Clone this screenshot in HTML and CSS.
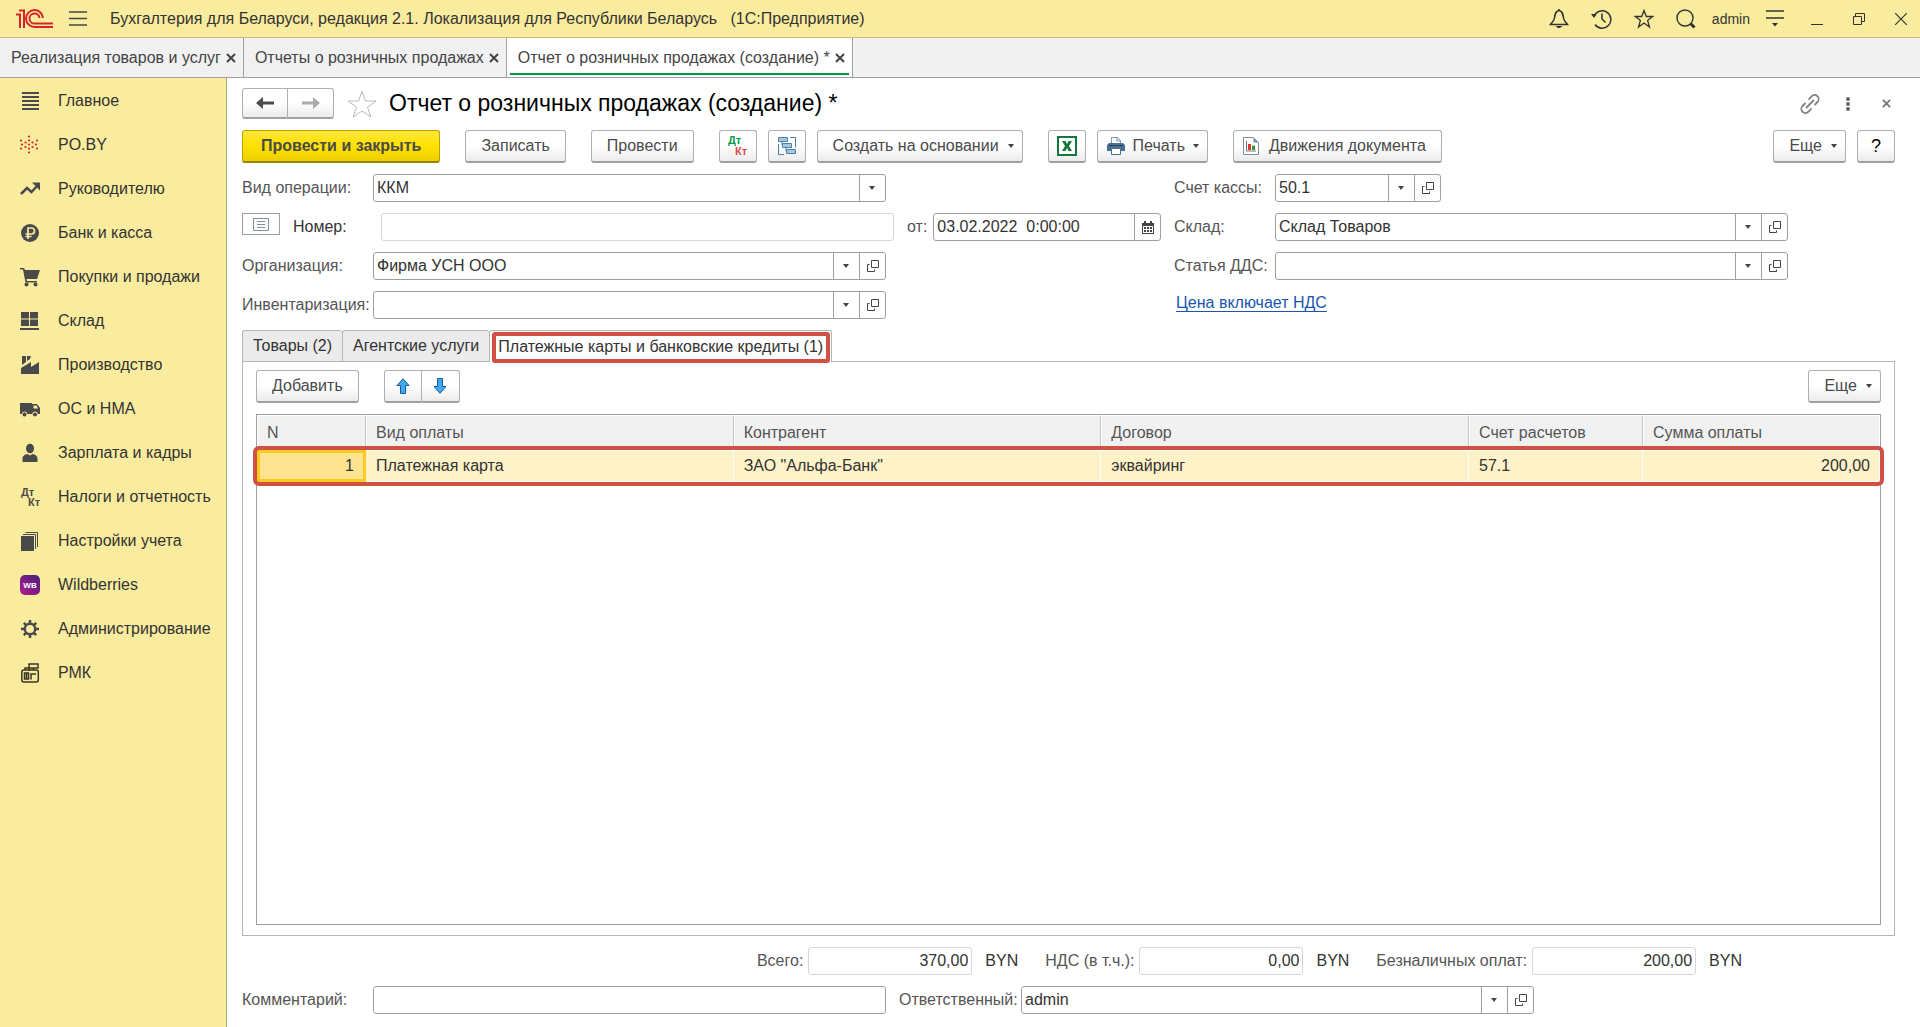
FILE: index.html
```html
<!DOCTYPE html>
<html lang="ru">
<head>
	<meta charset="UTF-8">
	<title>Отчет о розничных продажах (создание) *</title>
	<link rel="stylesheet" href="styles.css">
</head>
<body>
	<!-- общие иконки -->
	<svg class="sprite">
		<symbol id="cross" viewBox="0 0 10 10"><path d="M1 1l8 8M9 1L1 9" fill="none" stroke="currentColor" stroke-width="2"/></symbol>
		<symbol id="open" viewBox="0 0 12 12"><path d="M4.500.5h7v7h-7zM2.500 4.500h-2v7h7v-2" fill="none" stroke="#444"/></symbol>
		<symbol id="caret" viewBox="0 0 6 4"><path d="M0 0h6L3 4z" fill="#444"/></symbol>
	</svg>
	<header class="topbar">
		<svg class="logo" width="38" height="20" viewBox="0 0 38 20" fill="none" stroke="#d8232a" stroke-width="2"><path d="M0 5.500h4V19M3 1.500h5V19"/><path d="M27 9A8.500 8.500 0 1 0 19 18H37"/><path d="M23.500 9A5 5 0 1 0 19 14.500H37"/></svg>
		<button class="icon-btn menu" aria-label="Меню"><svg width="18" height="15" viewBox="0 0 18 15" stroke="#444" stroke-width="1.500"><path d="M0 1h18M0 7.500h18M0 14h18"/></svg></button>
		<div class="app-name">Бухгалтерия для Беларуси, редакция 2.1. Локализация для Республики Беларусь &nbsp; (1С:Предприятие)</div>
		<div class="top-tools">
			<button class="icon-btn" aria-label="Уведомления"><svg width="20" height="20" viewBox="0 0 20 20" fill="none" stroke="#333" stroke-width="1.500"><path d="M10 1.500C6.500 2 6 5 5.500 9 5 12 3 13.500 1.500 15.500h17C17 13.500 15 12 14.500 9 14 5 13.500 2 10 1.500z"/><path d="M10 0v2"/><path d="M6.500 17h7L11 19H9z" fill="#333" stroke="none"/></svg></button>
			<button class="icon-btn" aria-label="История"><svg width="21" height="20" viewBox="0 0 21 20" fill="none" stroke="#333" stroke-width="1.500"><path d="M3 7.500A8.700 8.700 0 1 1 4 15.500"/><path d="M11 4.500V10l3.500 3.500"/><path d="M0 5l5.500 0L3 9z" fill="#333" stroke="none"/></svg></button>
			<button class="icon-btn" aria-label="Избранное"><svg width="20" height="20" viewBox="0 0 20 20" fill="none" stroke="#333" stroke-width="1.300"><path d="M10 1.500l2.300 6h6.300l-5 3.900 1.900 6.600L10 14l-5.500 4 1.900-6.600-5-3.900h6.300z"/></svg></button>
			<button class="icon-btn" aria-label="Поиск"><svg width="20" height="20" viewBox="0 0 20 20" fill="none" stroke="#333" stroke-width="1.400"><circle cx="9" cy="9" r="8"/><path d="M14.500 14.500l4 4" stroke-width="3"/></svg></button>
			<button class="icon-btn user">admin</button>
			<button class="icon-btn" aria-label="Настройки"><svg width="18" height="17" viewBox="0 0 18 17" stroke="#333" stroke-width="1.300"><path d="M0 1h18M0 8h18"/><path d="M6 13h6l-3 3.500z" fill="#333" stroke="none"/></svg></button>
			<button class="icon-btn win" aria-label="Свернуть"><svg width="12" height="12" viewBox="0 0 12 12"><path d="M0 11.500h12" stroke="#333"/></svg></button>
			<button class="icon-btn win" aria-label="Окно"><svg width="12" height="12" viewBox="0 0 12 12" fill="none" stroke="#333"><path d="M.5 3.500h8v8h-8zM2.500 3V.5h9v8H9"/></svg></button>
			<button class="icon-btn win" aria-label="Закрыть"><svg width="12" height="12" viewBox="0 0 12 12" stroke="#333" stroke-width="1.200"><path d="M0 0l12 12M12 0L0 12"/></svg></button>
		</div>
	</header>
	<nav class="tabs">
		<div class="tab"><a href="#">Реализация товаров и услуг</a><button class="icon-btn" aria-label="Закрыть"><svg width="10" height="10"><use href="#cross"/></svg></button></div>
		<div class="tab"><a href="#">Отчеты о розничных продажах</a><button class="icon-btn" aria-label="Закрыть"><svg width="10" height="10"><use href="#cross"/></svg></button></div>
		<div class="tab active"><a href="#">Отчет о розничных продажах (создание) *</a><button class="icon-btn" aria-label="Закрыть"><svg width="10" height="10"><use href="#cross"/></svg></button></div>
	</nav>
	<div class="main">
		<aside class="sidebar">
			<a href="#"><svg width="20" height="20" viewBox="0 0 20 20" stroke="#4a4a4a" stroke-width="2"><path d="M2 2h17M2 6h17M2 10h17M2 14h17M2 18h17"/></svg>Главное</a>
			<a href="#"><svg width="20" height="20" viewBox="0 0 20 20" fill="none" stroke="#d9261c" stroke-width="2.200" stroke-linecap="round"><path d="M9 1.500v0M9 5.500v0M9 9.500v0M9 13.500v0M9 17.500v0M5.500 7.500v0M5.500 12v0M12.500 7.500v0M12.500 12v0M1 5.500v0M1 13.500v0M17 5.500v0M17 13.500v0M2 9.500v0M16 9.500v0"/></svg>PO.BY</a>
			<a href="#"><svg width="20" height="20" viewBox="0 0 20 20" fill="none" stroke="#4a4a4a" stroke-width="2.500"><path d="M1 15l6-6 4.500 4L18 6"/><path d="M12 3.500h8v8z" fill="#4a4a4a" stroke="none"/></svg>Руководителю</a>
			<a href="#"><svg width="20" height="20" viewBox="0 0 20 20"><circle cx="10" cy="10" r="9" fill="#4a4a4a"/><path d="M8 16V5h3.500a3 3 0 0 1 0 6H5.500M5.500 13.500h6" fill="none" stroke="#faec9e" stroke-width="1.700"/></svg>Банк и касса</a>
			<a href="#"><svg width="20" height="20" viewBox="0 0 20 20" fill="#4a4a4a"><path d="M0 1h4l1 2h15l-3 9H6.500l.5 2h10v1.500H5.500L3 2.500H0z"/><circle cx="6.500" cy="17.500" r="2"/><circle cx="15.500" cy="17.500" r="2"/></svg>Покупки и продажи</a>
			<a href="#"><svg width="20" height="20" viewBox="0 0 20 20" fill="#4a4a4a"><path d="M1 1h8v6.500H1zM10 1h8v6.500h-8zM1 8.500h8V15H1zM10 8.500h8V15h-8zM0 17h19v2H0z"/></svg>Склад</a>
			<a href="#"><svg width="20" height="20" viewBox="0 0 20 20" fill="#4a4a4a"><path d="M1 19v-6l10-6v5l8-5v12zM2 1h4v6l-4 3zM7 1h4l-1 3-3 2z"/></svg>Производство</a>
			<a href="#"><svg width="20" height="20" viewBox="0 0 20 20" fill="#4a4a4a"><path d="M0 4h12v11H0zM12 5h5l3 4v6h-8z"/><path d="M13.500 6.500h3l1.500 3h-4.500z" fill="#faec9e"/><g stroke="#faec9e"><circle cx="4.500" cy="15.500" r="2.500"/><circle cx="15" cy="15.500" r="2.500"/></g></svg>ОС и НМА</a>
			<a href="#"><svg width="20" height="20" viewBox="0 0 20 20" fill="#4a4a4a"><ellipse cx="10" cy="5.500" rx="4" ry="4.800"/><path d="M2.500 19v-3.500c0-3 3-4 5-4.500l2.500 1.500 2.500-1.500c2 .5 5 1.500 5 4.500V19z"/></svg>Зарплата и кадры</a>
			<a href="#"><svg width="20" height="20" viewBox="0 0 20 20" class="dk"><text x="1" y="9">Дт</text><text x="8" y="19">Кт</text></svg>Налоги и отчетность</a>
			<a href="#"><svg width="20" height="20" viewBox="0 0 20 20" fill="none" stroke="#4a4a4a"><path d="M1 5h13v15H1z" fill="#4a4a4a" stroke="none"/><path d="M3 3.500h12.500V18M5.500 1.500h12V16"/></svg>Настройки учета</a>
			<a href="#"><svg width="20" height="20" viewBox="0 0 20 20"><defs><linearGradient id="wb" x1="0" y1="1" x2="1" y2="0"><stop offset="0" stop-color="#b01c8c"/><stop offset="1" stop-color="#47207e"/></linearGradient></defs><rect width="20" height="20" rx="5" fill="url(#wb)"/><text x="10" y="13" class="wb-text">WB</text></svg>Wildberries</a>
			<a href="#"><svg width="20" height="20" viewBox="0 0 20 20" fill="none" stroke="#4a4a4a"><circle cx="10" cy="10" r="5.200" stroke-width="2.400"/><path d="M10 1v4M10 15v4M1 10h4M15 10h4M3.800 3.800L6.500 6.500M13.500 13.500l2.700 2.700M3.800 16.200l2.700-2.700M13.500 6.500l2.700-2.700" stroke-width="2.500"/></svg>Администрирование</a>
			<a href="#"><svg width="20" height="20" viewBox="0 0 20 20" fill="none" stroke="#3a3524" stroke-width="1.500"><rect x="1.800" y="7" width="16.500" height="12" rx="2"/><path d="M9 1h9v4H9zM13.500 5v2M5 7V5h4v3M4.500 10h4v6h-4zM6.500 10v6M11 16.500V11h5"/></svg>РМК</a>
		</aside>
		<main class="content">
			<div class="title-row">
				<div class="group nav">
					<button class="btn" aria-label="Назад"><svg width="18" height="12" viewBox="0 0 18 12" fill="#4a4a4a"><path d="M0 6l7-6v4.500h11v3H7V12z"/></svg></button>
					<button class="btn" aria-label="Вперед"><svg width="18" height="12" viewBox="0 0 18 12" fill="#aaa"><path d="M18 6l-7-6v4.500H0v3h11V12z"/></svg></button>
				</div>
				<button class="icon-btn star" aria-label="В избранное"><svg width="30" height="28" viewBox="0 0 30 28" fill="#fff" stroke="#b4bac2"><path d="M15 1.500l3.500 9.500H29l-8.500 6.200L24 27l-9-6-9 6 3.500-9.800L1 11h10.500z"/></svg></button>
				<h1>Отчет о розничных продажах (создание) *</h1>
				<div class="title-tools">
					<button class="icon-btn" aria-label="Ссылка"><svg width="20" height="20" viewBox="0 0 20 20" fill="none" stroke="#808080" stroke-width="1.800" stroke-linecap="round"><path d="M9 5l2.500-2.700a4 4 0 0 1 6 5.700L15 10.500M11 15l-2.500 2.700a4 4 0 0 1-6-5.700L5 9.500M6.500 13.500l7-7"/></svg></button>
					<button class="icon-btn" aria-label="Действия"><svg width="4" height="14" viewBox="0 0 4 14" fill="#666"><circle cx="2" cy="2" r="2"/><circle cx="2" cy="7" r="2"/><circle cx="2" cy="12" r="2"/></svg></button>
					<button class="icon-btn close" aria-label="Закрыть"><svg width="9" height="9" viewBox="0 0 10 10" stroke="#777" stroke-width="2"><path d="M1 1l8 8M9 1L1 9"/></svg></button>
				</div>
			</div>
			<div class="toolbar">
				<button class="btn primary">Провести и закрыть</button>
				<button class="btn">Записать</button>
				<button class="btn">Провести</button>
				<div class="btns">
					<button class="btn square" aria-label="Дт Кт"><svg width="22" height="20" viewBox="0 0 22 20" class="dk"><text x="1" y="8" fill="#0a9a4a">Дт</text><text x="8" y="19" fill="#dd4b48">Кт</text></svg></button>
					<button class="btn square" aria-label="Структура подчиненности"><svg width="20" height="20" viewBox="0 0 20 20" fill="#a9c8e0" stroke="#4a80aa"><path d="M1.500 1.500h9v4h-9zM5.500 7.500h9v4h-9zM9.500 13.500h9v4h-9z"/><path d="M13 1.500h5.500v10M1.500 8v10.500H7M5 6v3M9 12v3" fill="none"/></svg></button>
					<button class="btn drop">Создать на основании<svg width="6" height="4"><use href="#caret"/></svg></button>
				</div>
				<div class="btns">
					<button class="btn square" aria-label="Excel"><svg width="20" height="20" viewBox="0 0 20 20"><path d="M1 1h18v18H1z" fill="#fff" stroke="#14783e" stroke-width="2"/><path d="M5 5h3.500L10 8l1.500-3H15l-3 5 3 5h-3.500L10 12l-1.500 3H5l3-5z" fill="#14783e"/></svg></button>
					<button class="btn drop with-icon"><svg width="18" height="18" viewBox="0 0 18 18"><path d="M4.500 8V.5h6l3 3V8" fill="#fff" stroke="#7d8fa3"/><path d="M10 .5V4h3.500" fill="none" stroke="#7d8fa3"/><path d="M0 8l2-2h14l2 2v6H0z" fill="#4c6f94"/><path d="M2 8.500h14" stroke="#27425f"/><path d="M4.500 11.500h9v6h-9z" fill="#fff" stroke="#4c6f94"/></svg>Печать<svg width="6" height="4"><use href="#caret"/></svg></button>
				</div>
				<button class="btn with-icon"><svg width="16" height="18" viewBox="0 0 16 18"><path d="M.5.5h10l5 5v12H.5z" fill="#fff" stroke="#7d8fa3"/><path d="M10.500.5l5 5h-5z" fill="#7d8fa3"/><path d="M3.500 4v10H13" fill="none" stroke="#777"/><path d="M5 7h3v6H5z" fill="#dd3a2f"/><path d="M9 8.500h3V13H9z" fill="#3c9a35"/></svg>Движения документа</button>
				<div class="btns right">
					<button class="btn drop">Еще<svg width="6" height="4"><use href="#caret"/></svg></button>
					<button class="btn square help">?</button>
				</div>
			</div>
			<form class="form">
				<div class="form-left">
					<div class="row">
						<label for="op">Вид операции:</label>
						<div class="field"><select id="op"><option>ККМ</option></select></div>
					</div>
					<div class="row">
						<button type="button" class="list-btn" aria-label="Список"><svg width="16" height="13" viewBox="0 0 16 13" fill="none" stroke="#7d8fa3"><path d="M.5.5h15v12H.5zM4 3.500h8M4 6.500h8M4 9.500h8"/></svg></button>
						<label for="num" class="num-label">Номер:</label>
						<div class="field readonly"><input type="text" id="num" readonly></div>
						<label for="date" class="auto">от:</label>
						<div class="field date"><input type="text" id="date" value="03.02.2022  0:00:00"><button type="button" aria-label="Календарь"><svg width="12" height="13" viewBox="0 0 12 13"><path d="M0 2h12v11H0z" fill="#444"/><path d="M3 0v3M9 0v3" stroke="#444" stroke-width="2"/><path d="M1 5h10v7H1z" fill="#fff"/><path d="M2 7h8M2 10h8" stroke="#444" stroke-width="2" stroke-dasharray="2 1"/></svg></button></div>
					</div>
					<div class="row">
						<label for="org">Организация:</label>
						<div class="field"><select id="org"><option>Фирма УСН ООО</option></select><button type="button" aria-label="Открыть"><svg width="12" height="12"><use href="#open"/></svg></button></div>
					</div>
					<div class="row">
						<label for="inv">Инвентаризация:</label>
						<div class="field"><select id="inv"><option></option></select><button type="button" aria-label="Открыть"><svg width="12" height="12"><use href="#open"/></svg></button></div>
					</div>
				</div>
				<div class="form-right">
					<div class="row">
						<label for="acc">Счет кассы:</label>
						<div class="field small"><select id="acc"><option>50.1</option></select><button type="button" aria-label="Открыть"><svg width="12" height="12"><use href="#open"/></svg></button></div>
					</div>
					<div class="row">
						<label for="store">Склад:</label>
						<div class="field"><select id="store"><option>Склад Товаров</option></select><button type="button" aria-label="Открыть"><svg width="12" height="12"><use href="#open"/></svg></button></div>
					</div>
					<div class="row">
						<label for="dds">Статья ДДС:</label>
						<div class="field"><select id="dds"><option></option></select><button type="button" aria-label="Открыть"><svg width="12" height="12"><use href="#open"/></svg></button></div>
					</div>
					<a href="#" class="link">Цена включает НДС</a>
				</div>
			</form>
			<div class="page-tabs">
				<button class="page-tab">Товары (2)</button>
				<button class="page-tab">Агентские услуги</button>
				<button class="page-tab current">Платежные карты и банковские кредиты (1)</button>
			</div>
			<section class="panel">
				<div class="toolbar">
					<button class="btn">Добавить</button>
					<div class="group">
						<button class="btn square" aria-label="Вверх"><svg width="14" height="16" viewBox="0 0 14 16" fill="#3fa9f5" stroke="#1b5e8e"><path d="M7 .7l6 6.800H9.500v8h-5v-8H1z"/></svg></button>
						<button class="btn square" aria-label="Вниз"><svg width="14" height="16" viewBox="0 0 14 16" fill="#3fa9f5" stroke="#1b5e8e"><path d="M7 15.300l6-6.800H9.500v-8h-5v8H1z"/></svg></button>
					</div>
					<button class="btn drop right">Еще<svg width="6" height="4"><use href="#caret"/></svg></button>
				</div>
				<div class="list">
					<table>
						<thead>
							<tr><th class="c-n">N</th><th>Вид оплаты</th><th>Контрагент</th><th>Договор</th><th class="c-acc">Счет расчетов</th><th class="c-sum">Сумма оплаты</th></tr>
						</thead>
						<tbody>
							<tr class="selected"><td class="num cell">1</td><td>Платежная карта</td><td>ЗАО "Альфа-Банк"</td><td>эквайринг</td><td>57.1</td><td class="num">200,00</td></tr>
						</tbody>
					</table>
				</div>
			</section>
			<div class="totals">
				<label for="total">Всего:</label>
				<div class="field readonly"><input type="text" id="total" value="370,00" readonly></div>
				<span>BYN</span>
				<label for="vat">НДС (в т.ч.):</label>
				<div class="field readonly"><input type="text" id="vat" value="0,00" readonly></div>
				<span>BYN</span>
				<label for="cashless">Безналичных оплат:</label>
				<div class="field readonly"><input type="text" id="cashless" value="200,00" readonly></div>
				<span>BYN</span>
			</div>
			<div class="row">
				<label for="comment">Комментарий:</label>
				<div class="field"><input type="text" id="comment"></div>
				<label for="resp" class="resp">Ответственный:</label>
				<div class="field"><select id="resp"><option>admin</option></select><button type="button" aria-label="Открыть"><svg width="12" height="12"><use href="#open"/></svg></button></div>
			</div>
		</main>
	</div>
</body>
</html>
```
FILE: styles.css
```css
*{
	padding: 0;
	margin: 0;
	box-sizing: border-box;
}
body{
	min-height: 100vh;
	display: flex;
	flex-direction: column;
	background-color: #fff;
	color: #333;
	font: 16px/20px "Liberation Sans", Arial, sans-serif;
}
button, input, select{
	font: inherit;
	color: inherit;
}
svg{
	display: block;
	flex: none;
}
a{
	color: inherit;
	text-decoration: none;
}
.sprite{
	display: none;
}
.icon-btn{
	border: 0;
	background: none;
	display: flex;
	align-items: center;
	justify-content: center;
}

/* верхняя панель */
.topbar{
	height: 38px;
	display: flex;
	align-items: center;
	padding: 0 12px 0 16px;
	background-color: #faec9e;
	border-bottom: 1px solid #c9bd70;
}
.menu{
	margin: 0 23px 0 15px;
}
.top-tools{
	margin-left: auto;
	display: flex;
	align-items: center;
	gap: 22px;
}
.user{
	font-size: 14px;
	margin: 0 -6px;
}
.win{
	margin-left: 4px;
	width: 14px;
}
.win + .win{
	margin-left: 6px;
}

/* открытые окна */
.tabs{
	height: 40px;
	display: flex;
	background-color: #f1f1f1;
	border-bottom: 1px solid #a0a0a0;
}
.tab{
	display: flex;
	align-items: center;
	gap: 5px;
	padding: 0 7px 0 11px;
	border-right: 1px solid #a0a0a0;
	color: #444;
}
.tab.active{
	background-color: #fff;
	box-shadow: inset 3px 0 #fff, inset -3px 0 #fff, inset 0 -2px #fff, inset 0 -4px #009646;
}

.main{
	flex: 1;
	display: flex;
}
.sidebar{
	width: 227px;
	flex: none;
	padding-top: 1px;
	background-color: #faec9e;
	border-right: 1px solid #b5ab66;
}
.sidebar a{
	height: 44px;
	display: flex;
	align-items: center;
	gap: 18px;
	padding-left: 20px;
}
.dk{
	font-size: 11px;
	font-weight: bold;
	fill: #4a4a4a;
}
.wb-text{
	font-size: 8px;
	font-weight: bold;
	fill: #fff;
	text-anchor: middle;
}
.content{
	flex: 1;
	min-width: 0;
	display: flex;
	flex-direction: column;
	padding: 10px 25px 13px 15px;
}

/* заголовок */
.title-row{
	display: flex;
	align-items: center;
	height: 31px;
}
.star{
	margin: 0 12px 0 13px;
}
h1{
	font-size: 23px;
	line-height: 31px;
	font-weight: normal;
	color: #000;
}
.title-tools{
	margin-left: auto;
	display: flex;
	align-items: center;
	gap: 26px;
	padding-right: 4px;
}
.close{
	margin-left: 6px;
}

/* кнопки */
.toolbar{
	display: flex;
	gap: 25px;
	margin: 11px 0;
}
.btns{
	display: flex;
	gap: 11px;
}
.right{
	margin-left: auto;
}
.btn{
	height: 33px;
	display: flex;
	align-items: center;
	justify-content: center;
	padding: 0 15px;
	border: 1px solid #b0b0b0;
	border-bottom: 2px solid #a0a0a0;
	border-radius: 3px;
	background: linear-gradient(#fff 50%, #ebebeb);
	color: #4a4a4a;
	white-space: nowrap;
}
.primary{
	padding: 0 18px;
	border-color: #b8a100;
	border-bottom-color: #968300;
	background: linear-gradient(#ffe738, #ffe100 50%, #ecd000);
	font-weight: bold;
}
.square{
	width: 38px;
	padding: 0;
}
.drop{
	gap: 9px;
	padding-right: 8px;
}
.with-icon{
	padding-left: 9px;
}
.with-icon svg:first-child{
	margin-right: 10px;
}
.drop.with-icon{
	gap: 8px;
}
.drop.with-icon svg:first-child{
	margin-right: 0;
}
.help{
	color: #000;
	font-size: 18px;
}
.group{
	display: flex;
}
.group .btn:first-child{
	border-radius: 3px 0 0 3px;
}
.group .btn:last-child{
	border-left: 0;
	border-radius: 0 3px 3px 0;
}
.nav .btn{
	width: 46px;
	height: 31px;
	padding: 0;
}

/* реквизиты документа */
.form{
	display: grid;
	grid-template-columns: 932fr 721fr;
}
.form-left, .form-right{
	display: flex;
	flex-direction: column;
	gap: 11px;
}
.row{
	display: flex;
	align-items: center;
}
.row label{
	flex: none;
	width: 131px;
	color: #555;
}
.form-right label{
	width: 101px;
}
.row .num-label{
	width: 88px;
	margin-left: 13px;
	color: #333;
}
.row .auto{
	width: auto;
	margin: 0 6px 0 13px;
}
.row .resp{
	width: 122px;
	margin-left: 13px;
}
.list-btn{
	width: 38px;
	height: 22px;
	align-self: flex-start;
	display: flex;
	align-items: center;
	justify-content: center;
	border: 1px solid #a0a0a0;
	background-color: #fff;
}
.field{
	flex: 0 1 513px;
	min-width: 0;
	height: 28px;
	display: flex;
	border: 1px solid #a0a0a0;
	border-radius: 3px;
	background-color: #fff;
}
.field.readonly{
	border-color: #d6d6d6;
}
.field.date{
	flex-basis: 228px;
}
.field.small{
	flex-basis: 166px;
}
.field input, .field select{
	flex: 1;
	min-width: 0;
	padding: 0 3px;
	border: 0;
	border-radius: 3px;
	background: none;
	white-space: pre;
}
.field select{
	appearance: none;
	background: url("data:image/svg+xml,%3Csvg xmlns='http://www.w3.org/2000/svg' width='26' height='26'%3E%3Cpath d='M0 0h1v26H0z' fill='%23a0a0a0'/%3E%3Cpath d='M10 11h6l-3 4z' fill='%23444'/%3E%3C/svg%3E") no-repeat right center;
}
.field button{
	width: 26px;
	flex: none;
	display: flex;
	align-items: center;
	justify-content: center;
	border: 0;
	border-left: 1px solid #a0a0a0;
	background: none;
}
.link{
	align-self: flex-start;
	margin: 2px 0 0 2px;
	color: #1a55b0;
	text-decoration: underline;
	text-underline-offset: 3px;
}

/* страницы */
.page-tabs{
	display: flex;
	margin-top: 11px;
}
.page-tab{
	height: 31px;
	padding: 0 10px;
	border: 1px solid #b5b5b5;
	border-bottom: 0;
	border-right: 0;
	border-radius: 3px 3px 0 0;
	background-color: #ebebeb;
}
.current{
	position: relative;
	padding: 0 8px;
	border-right: 1px solid #b5b5b5;
	background-color: #fff;
	margin-bottom: -1px;
	height: 32px;
}
.current::after{
	content: "";
	position: absolute;
	inset: 1px 1px -1px 2px;
	border: 4px solid #d05044;
	border-radius: 3px;
}
.panel{
	flex: 1;
	display: flex;
	flex-direction: column;
	padding: 8px 13px 10px;
	border: 1px solid #b5b5b5;
}
.panel .toolbar{
	margin-top: 0;
}
.list{
	flex: 1;
	border: 1px solid #a0a0a0;
}
table{
	width: 100%;
	table-layout: fixed;
	border-collapse: separate;
	border-spacing: 0;
}
th{
	height: 35px;
	padding: 0 9px;
	border: 1px solid #fff;
	border-right-color: #c8c8c8;
	background-color: #f1f1f1;
	color: #555;
	font-weight: normal;
	text-align: left;
}
th:last-child{
	border-right-color: #fff;
}
td{
	height: 32px;
	padding: 0 9px 0 10px;
	border: 1px solid #fff;
	border-left: 0;
	background-color: #fdf2c8;
}
.num{
	text-align: right;
}
.c-n{
	width: 109px;
}
.c-acc{
	width: 174px;
}
.c-sum{
	width: 237px;
}
.cell{
	border: 3px solid #facb20;
	background-color: #fee390;
}
.selected{
	outline: 4px solid #d05044;
	border-radius: 2px;
}

/* итоги */
.totals{
	display: flex;
	align-items: center;
	justify-content: flex-end;
	padding-right: 153px;
	margin: 11px 0;
}
.totals label{
	color: #555;
	margin-right: 5px;
}
.totals .field{
	flex-basis: 164px;
}
.totals input{
	text-align: right;
}
.totals span{
	margin: 0 27px 0 13px;
}
.totals span:last-child{
	margin-right: 0;
}
```
